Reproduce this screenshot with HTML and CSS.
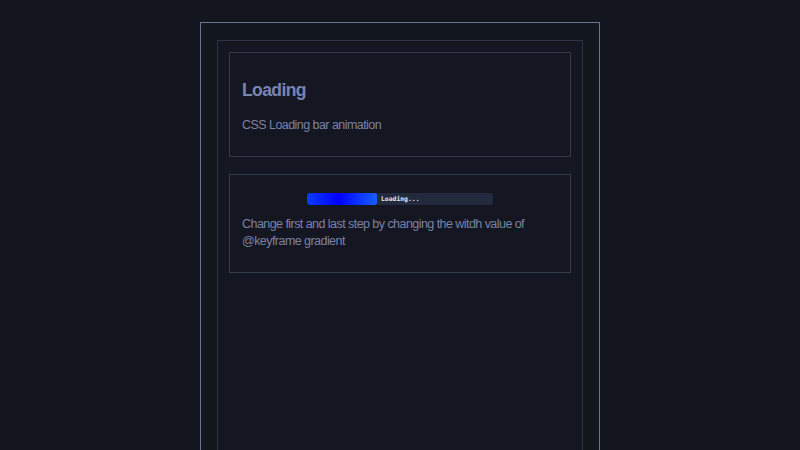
FILE: index.html
```html
<!DOCTYPE html>
<html lang="en">
<head>
    <meta charset="UTF-8">
    <title>Loading</title>
    <link rel="stylesheet" href="styles.css">
</head>
<body>

<div class="frame">
    <div class="panel">
        <div class="card intro">
            <h2>Loading</h2>
            <p>CSS Loading bar animation</p>
        </div>

        <div class="card demo">
            <div class="loader">
                <div class="loader-fill"></div>
                <span class="loader-label">Loading...</span>
            </div>
            <p>Change first and last step by changing the witdh value of @keyframe gradient</p>
        </div>
    </div>
</div>

</body>
</html>
```

FILE: styles.css
```css
html, body {
    margin: 0;
    height: 100%;
    overflow: hidden;
}
body {
    background-color: #13151f;
    font-family: "Liberation Sans", Arial, sans-serif;
    color: #7b82a4;
}

.frame {
    box-sizing: border-box;
    width: 400px;
    min-height: 100%;
    margin: 22px auto 0;
    padding: 17px 16px 0;
    border: 1px solid #6b7390;
    background-color: #12161d;
}
.panel {
    box-sizing: border-box;
    min-height: 420px;
    padding: 11px 11px 0;
    border: 1px solid #2e3446;
    background-color: #141621;
}

.card {
    border: 1px solid #333a4e;
    padding: 0 12px;
}
.card + .card {
    margin-top: 17px;
}
.card p {
    margin: 0;
    font-size: 12.5px;
    line-height: 17px;
    letter-spacing: -0.55px;
}

.intro {
    height: 103px;
}
.intro h2 {
    margin: 26px 0 16px;
    font-size: 17.5px;
    line-height: 22px;
    letter-spacing: -0.6px;
    color: #7a83b1;
}

.demo {
    padding-top: 18px;
    padding-bottom: 22px;
}

/* track + animated fill */
.loader {
    position: relative;
    display: flex;
    align-items: center;
    width: 186px;
    height: 12px;
    margin: 0 auto 11px;
    border-radius: 3px;
    background-color: #232a3d;
    overflow: hidden;
}
.loader-fill {
    width: 70px;
    height: 100%;
    border-radius: 3px;
    background: linear-gradient(to right, #0b3cff, #0000ff 45%, #1760ff);
    animation: gradient 3s ease-in-out infinite;
    animation-play-state: paused;
}
.loader-label {
    margin-left: 4px;
    font-family: "DejaVu Sans Mono", "Liberation Mono", monospace;
    font-size: 6.4px;
    font-weight: bold;
    color: #e6e8f0;
}

@keyframes gradient {
    0% { width: 70px; }
    50% { width: 150px; }
    100% { width: 70px; }
}
```
